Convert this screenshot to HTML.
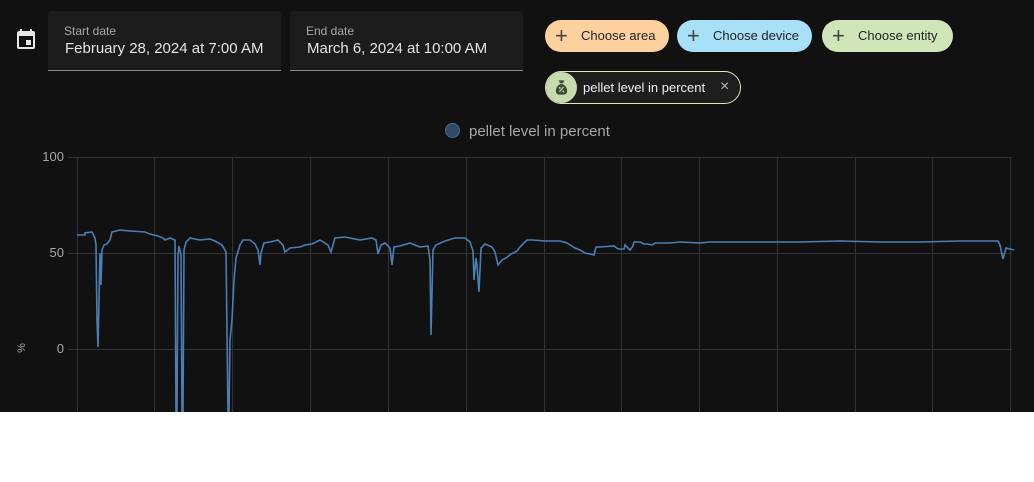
<!DOCTYPE html>
<html><head><style>
body{margin:0;width:1034px;height:482px;background:#fff;font-family:"Liberation Sans",sans-serif;overflow:hidden}
.dark{position:absolute;left:0;top:0;width:1034px;height:412px;background:#111}
.field{position:absolute;top:11px;height:59px;background:#1c1c1c;border-bottom:1px solid #8a8a8a;border-radius:4px 4px 0 0}
.field .l{position:absolute;left:16px;top:13px;font-size:12px;color:#a8a8a8}
.field .v{position:absolute;left:17px;top:29px;font-size:15px;color:#e4e4e4}
.chip{position:absolute;top:20px;height:32px;border-radius:16px;font-size:13px;color:#222;line-height:32px;box-sizing:border-box}
.chip .p{position:absolute;left:10px;top:0;font-size:22px;font-weight:300;color:#444}
</style></head><body>
<div class="dark"></div>
<svg style="position:absolute;left:14px;top:28px" width="24" height="24" viewBox="0 0 24 24"><path fill="#e6e6e6" d="M19 19H5V8h14m-3-7v2H8V1H6v2H5c-1.11 0-2 .89-2 2v14a2 2 0 002 2h14a2 2 0 002-2V5a2 2 0 00-2-2h-1V1m-1 11h-5v5h5v-5z"/></svg>
<div class="field" style="left:48px;width:233px"><div class="l">Start date</div><div class="v">February 28, 2024 at 7:00 AM</div></div>
<div class="field" style="left:290px;width:233px"><div class="l">End date</div><div class="v">March 6, 2024 at 10:00 AM</div></div>
<div class="chip" style="left:545px;width:124px;background:#fdd19e"><span class="p">+</span><span style="position:absolute;left:36px">Choose area</span></div>
<div class="chip" style="left:677px;width:135px;background:#a8e0f8"><span class="p">+</span><span style="position:absolute;left:36px">Choose device</span></div>
<div class="chip" style="left:822px;width:131px;background:#d0e6b8"><span class="p">+</span><span style="position:absolute;left:36px">Choose entity</span></div>
<div style="position:absolute;left:545px;top:71px;width:196px;height:33px;box-sizing:border-box;border:1.5px solid #dfe8b8;border-radius:17px;background:#1e1e1e"></div>
<div style="position:absolute;left:546px;top:72px;width:31px;height:31px;border-radius:50%;background:#c6dcae"></div>
<svg style="position:absolute;left:553px;top:79px" width="17" height="17" viewBox="0 0 24 24"><path fill="#3a4a35" d="M8 2h8l-2 4h-4zM12 7c5 0 8 6 8 10 0 3-2 5-5 5H9c-3 0-5-2-5-5 0-4 3-10 8-10z"/><path stroke="#c6dcae" stroke-width="1.6" d="M9 18l6-7"/><circle cx="9.5" cy="12.5" r="1.3" fill="#c6dcae"/><circle cx="14.5" cy="17.5" r="1.3" fill="#c6dcae"/></svg>
<div style="position:absolute;left:583px;top:80px;font-size:13px;color:#f0f0f0">pellet level in percent</div>
<div style="position:absolute;left:720px;top:78px;font-size:16px;color:#bbb">×</div>
<div style="position:absolute;left:445px;top:123px;width:15px;height:15px;border-radius:50%;background:#2e4a66;border:1px solid #4a6c8c;box-sizing:border-box"></div>
<div style="position:absolute;left:469px;top:123px;font-size:15px;color:#a8a8a8">pellet level in percent</div>
<div style="position:absolute;left:30px;top:149px;width:34px;text-align:right;font-size:13px;color:#aaa">100</div>
<div style="position:absolute;left:30px;top:245px;width:34px;text-align:right;font-size:13px;color:#aaa">50</div>
<div style="position:absolute;left:30px;top:341px;width:34px;text-align:right;font-size:13px;color:#aaa">0</div>
<div style="position:absolute;left:17px;top:342px;font-size:11px;color:#aaa;transform:rotate(-90deg)">%</div>
<svg style="position:absolute;left:0;top:0" width="1034" height="412">
<g stroke="#333" stroke-width="1">
<path d="M68 157.5H1012M68 253.5H1012M68 349.5H1012"/>
<path d="M77.5 157V412M154.5 157V412M232.5 157V412M310.5 157V412M388.5 157V412M466.5 157V412M544.5 157V412M621.5 157V412M699.5 157V412M777.5 157V412M855.5 157V412M932.5 157V412M1010.5 157V412"/>
</g>
<polyline fill="none" stroke="#4b7fb4" stroke-width="1.6" points="77,235 85,235 85,233 92,232 95,238 96,245 97,320 98,347 99,300 100,253 101,285 102,250 104,245 107,244 110,240 112,232 120,230 130,231 145,232 150,234 158,236 163,238 165,240 170,238 175,240 176,412 177,412 178,255 179,246 181,255 182,412 183,412 184,250 186,242 190,238 200,240 210,239 215,241 222,245 226,252 228,412 229,412 230,340 232,320 234,280 236,258 240,245 243,240 250,240 255,244 258,250 260,265 261,253 264,243 270,242 278,240 283,245 285,252 290,248 300,247 305,245 312,244 320,240 328,245 331,252 335,238 345,237 360,240 372,238 376,240 378,254 381,245 385,243 390,248 392,265 394,247 400,246 410,243 420,247 428,246 430,260 431,335 433,250 436,245 445,241 455,238 465,238 470,242 473,251 474,280 476,258 477,265 479,292 481,248 485,244 492,247 495,252 498,265 502,260 506,258 511,254 517,251 520,247 524,243 527,240 533,240 545,241 560,241 567,243 575,248 580,250 585,253 590,254 594,255 596,247 600,247 614,246 618,249 624,249 625,245 630,250 633,246 634,242 640,242 644,244 648,244 652,245 655,243 670,243 680,242 700,243 710,242 750,242 770,242 800,242 840,241 880,242 920,242 960,241 998,241 1000,245 1003,259 1006,248 1010,249 1014,250"/>
</svg>
</body></html>
